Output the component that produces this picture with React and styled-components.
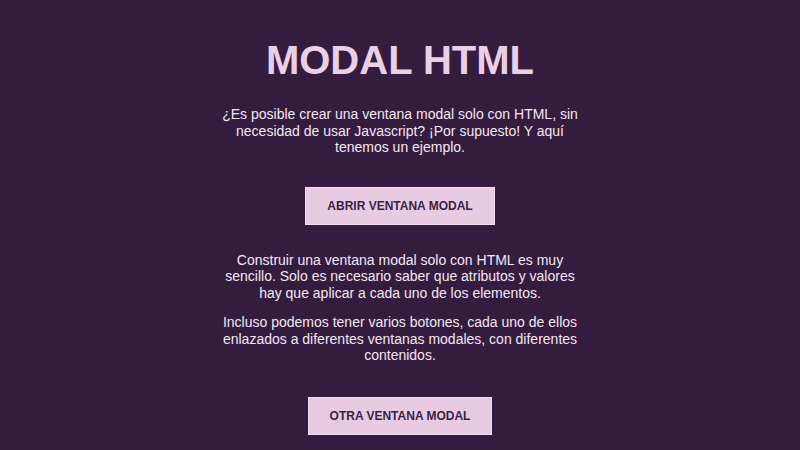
import styled, { createGlobalStyle } from "styled-components"

const GlobalStyle = createGlobalStyle`
  *, *::before, *::after {
    box-sizing: border-box;
  }
  html, body {
    margin: 0;
    padding: 0;
    background: #341c3f;
  }
  body {
    font-family: "Liberation Sans", Arial, sans-serif;
  }
`

const Page = styled.main`
  min-height: 100vh;
  display: flex;
  flex-direction: column;
  align-items: center;
  text-align: center;
  color: #f4e6f2;
  padding-top: 37px;
`

const Title = styled.h1`
  margin: 0 0 23px;
  font-size: 40px;
  line-height: 46px;
  font-weight: 700;
  color: #ead0e7;
`

const Text = styled.p`
  width: 364px;
  margin: 0 0 13px;
  font-size: 14px;
  line-height: 16.5px;
`

const Button = styled.a`
  display: inline-block;
  margin: ${(p) => p.$top || 0}px 0 ${(p) => p.$bottom || 0}px;
  padding: 11px 21px;
  background: #e8cbe3;
  border: 1px solid #f2dcef;
  color: #3a1f44;
  font-size: 12px;
  line-height: 14px;
  font-weight: 700;
  text-transform: uppercase;
  text-decoration: none;
  cursor: pointer;
`

const App = () => {
  return (
    <>
      <GlobalStyle />
      <Page>
        <Title>MODAL HTML</Title>
        <Text>
          ¿Es posible crear una ventana modal solo con HTML, sin necesidad de
          usar Javascript? ¡Por supuesto! Y aquí tenemos un ejemplo.
        </Text>
        <Button href="#modal" $top={18} $bottom={27}>
          Abrir ventana modal
        </Button>
        <Text>
          Construir una ventana modal solo con HTML es muy sencillo. Solo es
          necesario saber que atributos y valores hay que aplicar a cada uno de
          los elementos.
        </Text>
        <Text>
          Incluso podemos tener varios botones, cada uno de ellos enlazados a
          diferentes ventanas modales, con diferentes contenidos.
        </Text>
        <Button href="#otro-modal" $top={20}>
          Otra ventana modal
        </Button>
      </Page>
    </>
  )
}

export default App
